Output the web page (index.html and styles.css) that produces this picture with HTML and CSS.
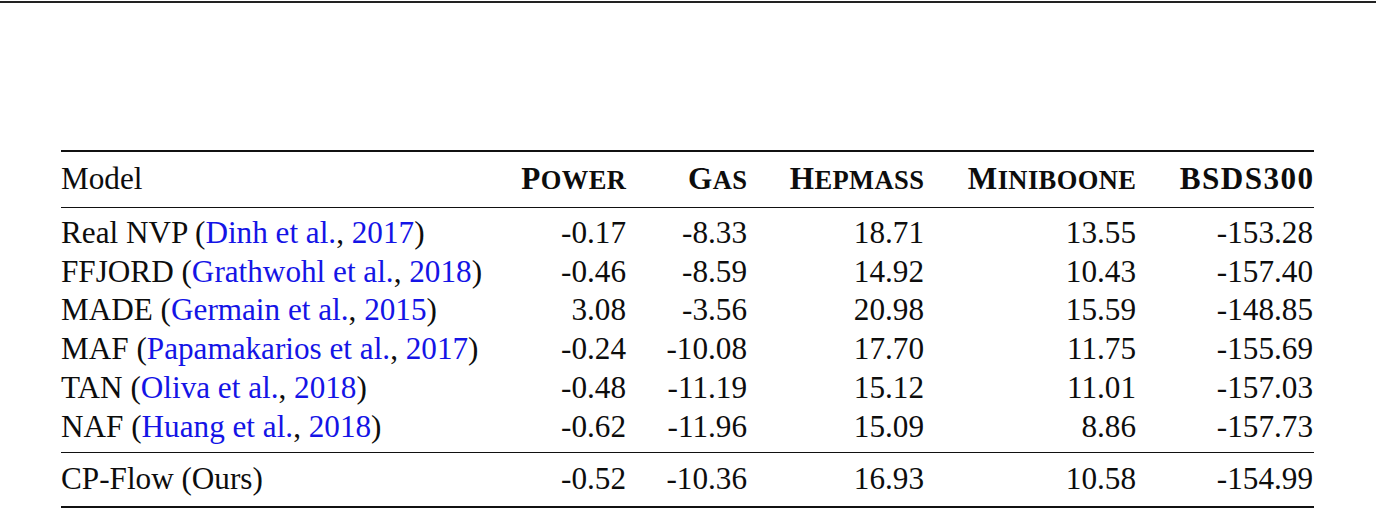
FILE: index.html
```html
<!DOCTYPE html>
<html>
<head>
<meta charset="utf-8">
<link rel="stylesheet" href="styles.css">
</head>
<body>
<div class="topline"></div>
<table class="results">
  <colgroup>
    <col class="c-model">
    <col class="c-power">
    <col class="c-gas">
    <col class="c-hep">
    <col class="c-mini">
    <col class="c-bsds">
  </colgroup>
  <thead>
    <tr>
      <th class="name">Model</th>
      <th class="num"><span class="hd">P<span class="sc">ower</span></span></th>
      <th class="num"><span class="hd">G<span class="sc">as</span></span></th>
      <th class="num"><span class="hd">H<span class="sc">epmass</span></span></th>
      <th class="num"><span class="hd">M<span class="sc">iniboone</span></span></th>
      <th class="num"><span class="hd wide">BSDS300</span></th>
    </tr>
  </thead>
  <tbody class="baselines">
    <tr class="first">
      <td class="name">Real NVP (<span class="cite">Dinh et al.</span>, <span class="cite">2017</span>)</td>
      <td class="num">-0.17</td><td class="num">-8.33</td><td class="num">18.71</td><td class="num">13.55</td><td class="num">-153.28</td>
    </tr>
    <tr>
      <td class="name">FFJORD (<span class="cite">Grathwohl et al.</span>, <span class="cite">2018</span>)</td>
      <td class="num">-0.46</td><td class="num">-8.59</td><td class="num">14.92</td><td class="num">10.43</td><td class="num">-157.40</td>
    </tr>
    <tr>
      <td class="name">MADE (<span class="cite">Germain et al.</span>, <span class="cite">2015</span>)</td>
      <td class="num">3.08</td><td class="num">-3.56</td><td class="num">20.98</td><td class="num">15.59</td><td class="num">-148.85</td>
    </tr>
    <tr>
      <td class="name">MAF (<span class="cite">Papamakarios et al.</span>, <span class="cite">2017</span>)</td>
      <td class="num">-0.24</td><td class="num">-10.08</td><td class="num">17.70</td><td class="num">11.75</td><td class="num">-155.69</td>
    </tr>
    <tr>
      <td class="name">TAN (<span class="cite">Oliva et al.</span>, <span class="cite">2018</span>)</td>
      <td class="num">-0.48</td><td class="num">-11.19</td><td class="num">15.12</td><td class="num">11.01</td><td class="num">-157.03</td>
    </tr>
    <tr class="last">
      <td class="name">NAF (<span class="cite">Huang et al.</span>, <span class="cite">2018</span>)</td>
      <td class="num">-0.62</td><td class="num">-11.96</td><td class="num">15.09</td><td class="num">8.86</td><td class="num">-157.73</td>
    </tr>
  </tbody>
  <tbody class="ours">
    <tr>
      <td class="name">CP-Flow (Ours)</td>
      <td class="num">-0.52</td><td class="num">-10.36</td><td class="num">16.93</td><td class="num">10.58</td><td class="num">-154.99</td>
    </tr>
  </tbody>
</table>
</body>
</html>
```

FILE: styles.css
```css
html, body {
  margin: 0;
  padding: 0;
  background: #ffffff;
}

body {
  font-family: "Liberation Serif", "Times New Roman", serif;
  color: #0d0d0d;
  width: 1376px;
  height: 510px;
  overflow: hidden;
}

.topline {
  height: 0;
  border-top: 2px solid #222222;
  margin-top: 1px;
  width: 1376px;
}

.results {
  margin-top: 147px;
  margin-left: 61px;
  width: 1253px;
  table-layout: fixed;
  border-collapse: collapse;
  border-spacing: 0;
  font-size: 31.2px;
  line-height: 38.8px;
  border-top: 2px solid #111111;
  border-bottom: 2px solid #111111;
}

.c-model { width: 440px; }
.c-power { width: 125px; }
.c-gas { width: 121px; }
.c-hep { width: 177px; }
.c-mini { width: 212px; }
.c-bsds { width: 178px; }

.results th,
.results td {
  padding: 0;
  white-space: nowrap;
}

.results th {
  font-weight: bold;
  padding-top: 8px;
  padding-bottom: 8px;
}

.results thead tr {
  border-bottom: 1px solid #111111;
}

.results th.name {
  font-weight: normal;
}

.name {
  text-align: left;
}

.num {
  text-align: right;
}

.results th.num:last-child,
.results td.num:last-child {
  padding-right: 1px;
}

.hd {
  letter-spacing: 0.4px;
  margin-right: -0.4px;
}

.hd.wide {
  letter-spacing: 1.4px;
  margin-right: -1.4px;
}

.sc {
  text-transform: uppercase;
  font-size: 0.85em;
  line-height: 1;
}

.cite {
  color: #1414e6;
}

.baselines tr.first td {
  padding-top: 6px;
}

.baselines tr.last td {
  padding-bottom: 5px;
}

.ours {
  border-top: 1px solid #111111;
}

.ours td {
  padding-top: 7px;
  padding-bottom: 8px;
}
```
